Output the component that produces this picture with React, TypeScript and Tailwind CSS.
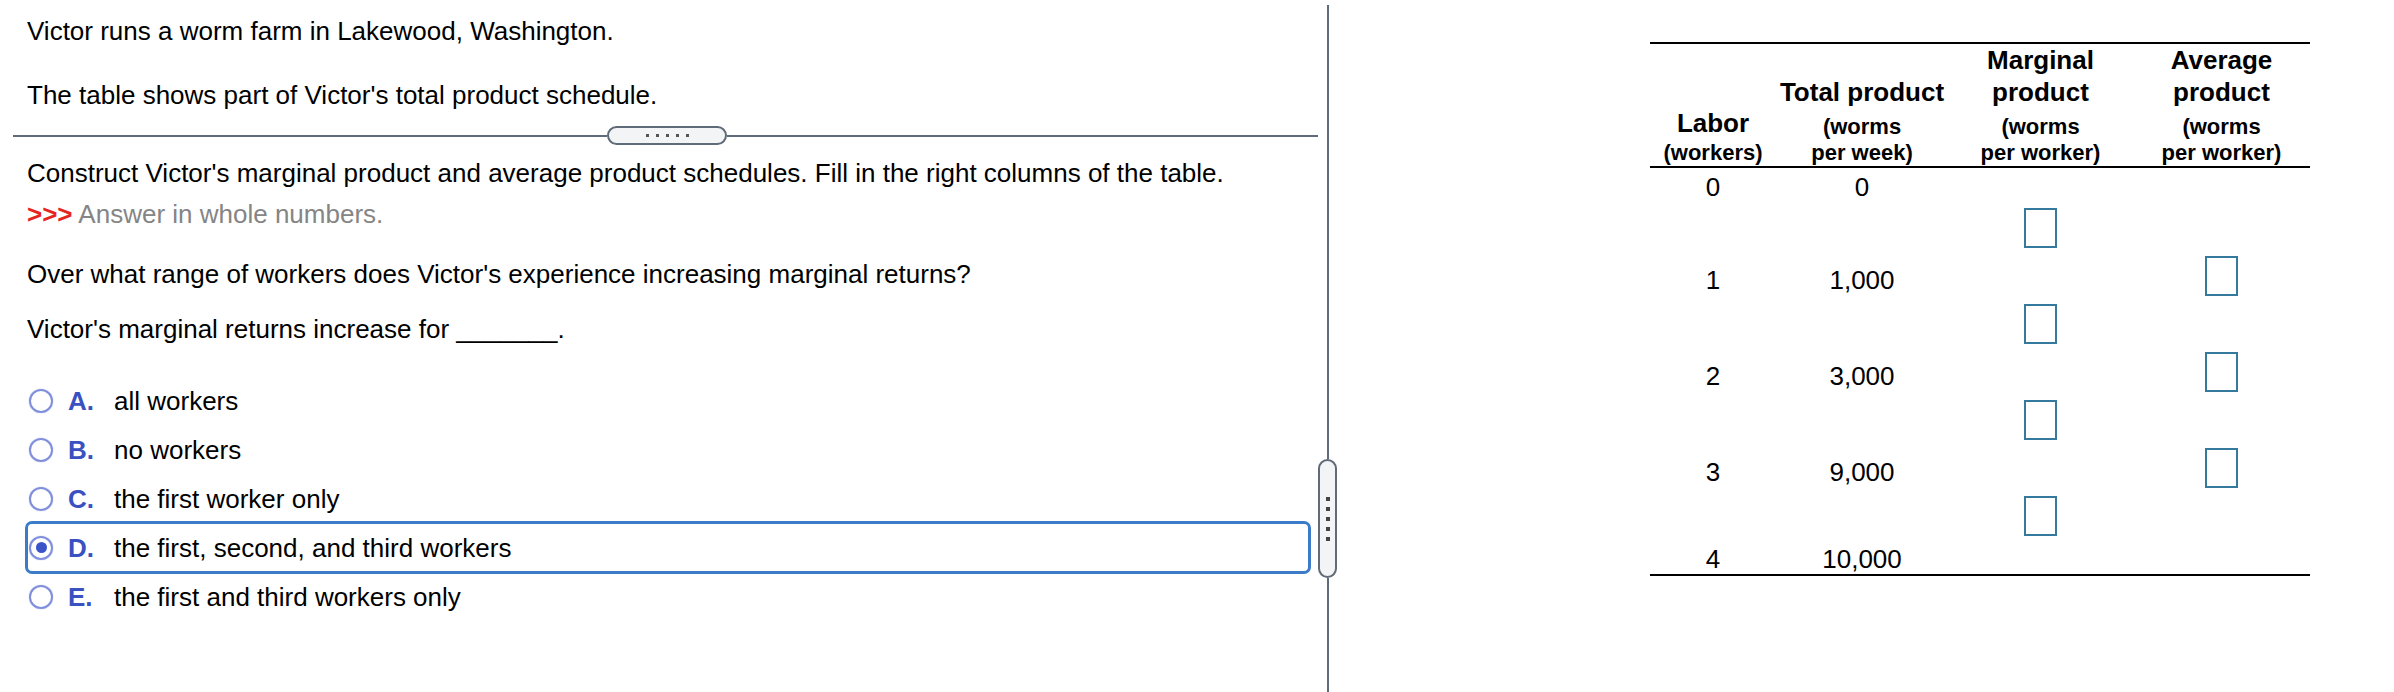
import React from "react";

const options = [
  { l: "A.", t: "all workers", sel: false },
  { l: "B.", t: "no workers", sel: false },
  { l: "C.", t: "the first worker only", sel: false },
  { l: "D.", t: "the first, second, and third workers", sel: true },
  { l: "E.", t: "the first and third workers only", sel: false },
];

function Box() {
  return <div className="w-[33px] h-[40px] border-2 border-[#35799c] bg-white" />;
}

function Radio({ sel }: { sel: boolean }) {
  return (
    <div className="ml-[2px] w-[24px] h-[24px] rounded-full border-2 border-[#7f8fdc] shadow-[0_0_1px_#7f8fdc] flex items-center justify-center flex-none">
      {sel && <div className="w-[11px] h-[11px] rounded-full bg-[#3b55c8]" />}
    </div>
  );
}

type Slot = {
  h: string;
  labor?: string;
  total?: string;
  marg?: boolean;
  avg?: boolean;
  shift?: boolean;
};

const slots: Slot[] = [
  { h: "h-[36px]", labor: "0", total: "0" },
  { h: "h-[48px]", marg: true },
  { h: "h-[48px]", labor: "1", total: "1,000", avg: true, shift: true },
  { h: "h-[48px]", marg: true },
  { h: "h-[48px]", labor: "2", total: "3,000", avg: true, shift: true },
  { h: "h-[48px]", marg: true },
  { h: "h-[48px]", labor: "3", total: "9,000", avg: true, shift: true },
  { h: "h-[48px]", marg: true },
  { h: "h-[34px]", labor: "4", total: "10,000" },
];

export default function App() {
  return (
    <div className="flex h-[692px] w-[2394px] bg-white text-black font-['Liberation_Sans',Arial,sans-serif] text-[26px] overflow-hidden">
      {/* Left panel */}
      <div className="w-[1318px] flex-none pl-[13px] pt-[15px] flex flex-col">
        <div className="pl-[14px] leading-[32px] h-[32px] whitespace-nowrap">
          Victor runs a worm farm in Lakewood, Washington.
        </div>
        <div className="pl-[14px] leading-[32px] h-[32px] mt-[32px] whitespace-nowrap">
          The table shows part of Victor's total product schedule.
        </div>
        <div className="flex items-center h-[19px] mt-[15px]">
          <div className="w-[594px] h-[2px] bg-[#5f6b78]" />
          <div className="w-[120px] h-[19px] flex-none rounded-full border-2 border-[#5f6b78] bg-[#f3f4f6] flex items-center justify-center gap-[7px]">
            <span className="w-[3px] h-[3px] bg-[#555]" />
            <span className="w-[3px] h-[3px] bg-[#555]" />
            <span className="w-[3px] h-[3px] bg-[#555]" />
            <span className="w-[3px] h-[3px] bg-[#555]" />
            <span className="w-[3px] h-[3px] bg-[#555]" />
          </div>
          <div className="flex-1 h-[2px] bg-[#5f6b78]" />
        </div>
        <div className="pl-[14px] leading-[32px] h-[32px] mt-[12px] whitespace-nowrap">
          Construct Victor's marginal product and average product schedules. Fill in the right columns of the table.
        </div>
        <div className="pl-[14px] leading-[32px] h-[32px] mt-[9px] whitespace-nowrap">
          <span className="font-bold text-[#e5261f]">&gt;&gt;&gt;</span>{" "}
          <span className="text-[#858585]">Answer in whole numbers.</span>
        </div>
        <div className="pl-[14px] leading-[32px] h-[32px] mt-[28px] whitespace-nowrap">
          Over what range of workers does Victor's experience increasing marginal returns?
        </div>
        <div className="pl-[14px] leading-[32px] h-[32px] mt-[23px] whitespace-nowrap">
          Victor's marginal returns increase for _______.
        </div>
        <div className="mt-[31px] flex flex-col ml-[14px] w-[1282px]">
          {options.map((o) => (
            <div
              key={o.l}
              className={
                o.sel
                  ? "h-[49px] flex items-center rounded-[5px] outline-[3px] outline-solid outline-[#3b7bc8] -outline-offset-1"
                  : "h-[49px] flex items-center"
              }
            >
              <Radio sel={o.sel} />
              <div className="ml-[15px] w-[46px] flex-none font-bold text-[#3a51c2] leading-[32px]">{o.l}</div>
              <div className="leading-[32px] whitespace-nowrap">{o.t}</div>
            </div>
          ))}
        </div>
      </div>

      {/* Vertical divider */}
      <div className="w-[19px] flex-none flex flex-col items-center pt-[5px]">
        <div className="w-[2px] h-[454px] bg-[#5f6b78]" />
        <div className="w-[19px] h-[119px] flex-none rounded-full border-2 border-[#5f6b78] bg-[#f3f4f6] flex flex-col items-center justify-center gap-[6px]">
          <span className="w-[4px] h-[4px] bg-[#444]" />
          <span className="w-[4px] h-[4px] bg-[#444]" />
          <span className="w-[4px] h-[4px] bg-[#444]" />
          <span className="w-[4px] h-[4px] bg-[#444]" />
          <span className="w-[4px] h-[4px] bg-[#444]" />
        </div>
        <div className="w-[2px] flex-1 bg-[#5f6b78]" />
      </div>

      {/* Right panel */}
      <div className="flex-1 pl-[313px] pt-[42px]">
        <div className="w-[660px] border-t-2 border-b-2 border-black">
          <div className="grid grid-cols-[126px_172px_185px_177px] h-[124px] font-bold border-b-2 border-black">
            <div className="flex flex-col justify-end items-center pb-[1px]">
              <div className="leading-[32px] mb-[1px]">Labor</div>
              <div className="leading-[26px] text-[22px]">(workers)</div>
            </div>
            <div className="flex flex-col justify-end items-center pb-[1px]">
              <div className="leading-[32px] mb-[6px] whitespace-nowrap">Total product</div>
              <div className="leading-[26px] text-[22px]">(worms</div>
              <div className="leading-[26px] text-[22px] whitespace-nowrap">per week)</div>
            </div>
            <div className="flex flex-col justify-end items-center pb-[1px]">
              <div className="leading-[32px]">Marginal</div>
              <div className="leading-[32px] mb-[6px]">product</div>
              <div className="leading-[26px] text-[22px]">(worms</div>
              <div className="leading-[26px] text-[22px] whitespace-nowrap">per worker)</div>
            </div>
            <div className="flex flex-col justify-end items-center pb-[1px]">
              <div className="leading-[32px]">Average</div>
              <div className="leading-[32px] mb-[6px]">product</div>
              <div className="leading-[26px] text-[22px]">(worms</div>
              <div className="leading-[26px] text-[22px] whitespace-nowrap">per worker)</div>
            </div>
          </div>
          {slots.map((s, i) => (
            <div key={i} className={"grid grid-cols-[126px_172px_185px_177px] " + s.h}>
              <div className={s.shift ? "flex items-center justify-center pt-[8px]" : "flex items-center justify-center"}>
                {s.labor}
              </div>
              <div className={s.shift ? "flex items-center justify-center pt-[8px]" : "flex items-center justify-center"}>
                {s.total}
              </div>
              <div className="flex items-center justify-center">{s.marg && <Box />}</div>
              <div className="flex items-center justify-center">{s.avg && <Box />}</div>
            </div>
          ))}
        </div>
      </div>
    </div>
  );
}
